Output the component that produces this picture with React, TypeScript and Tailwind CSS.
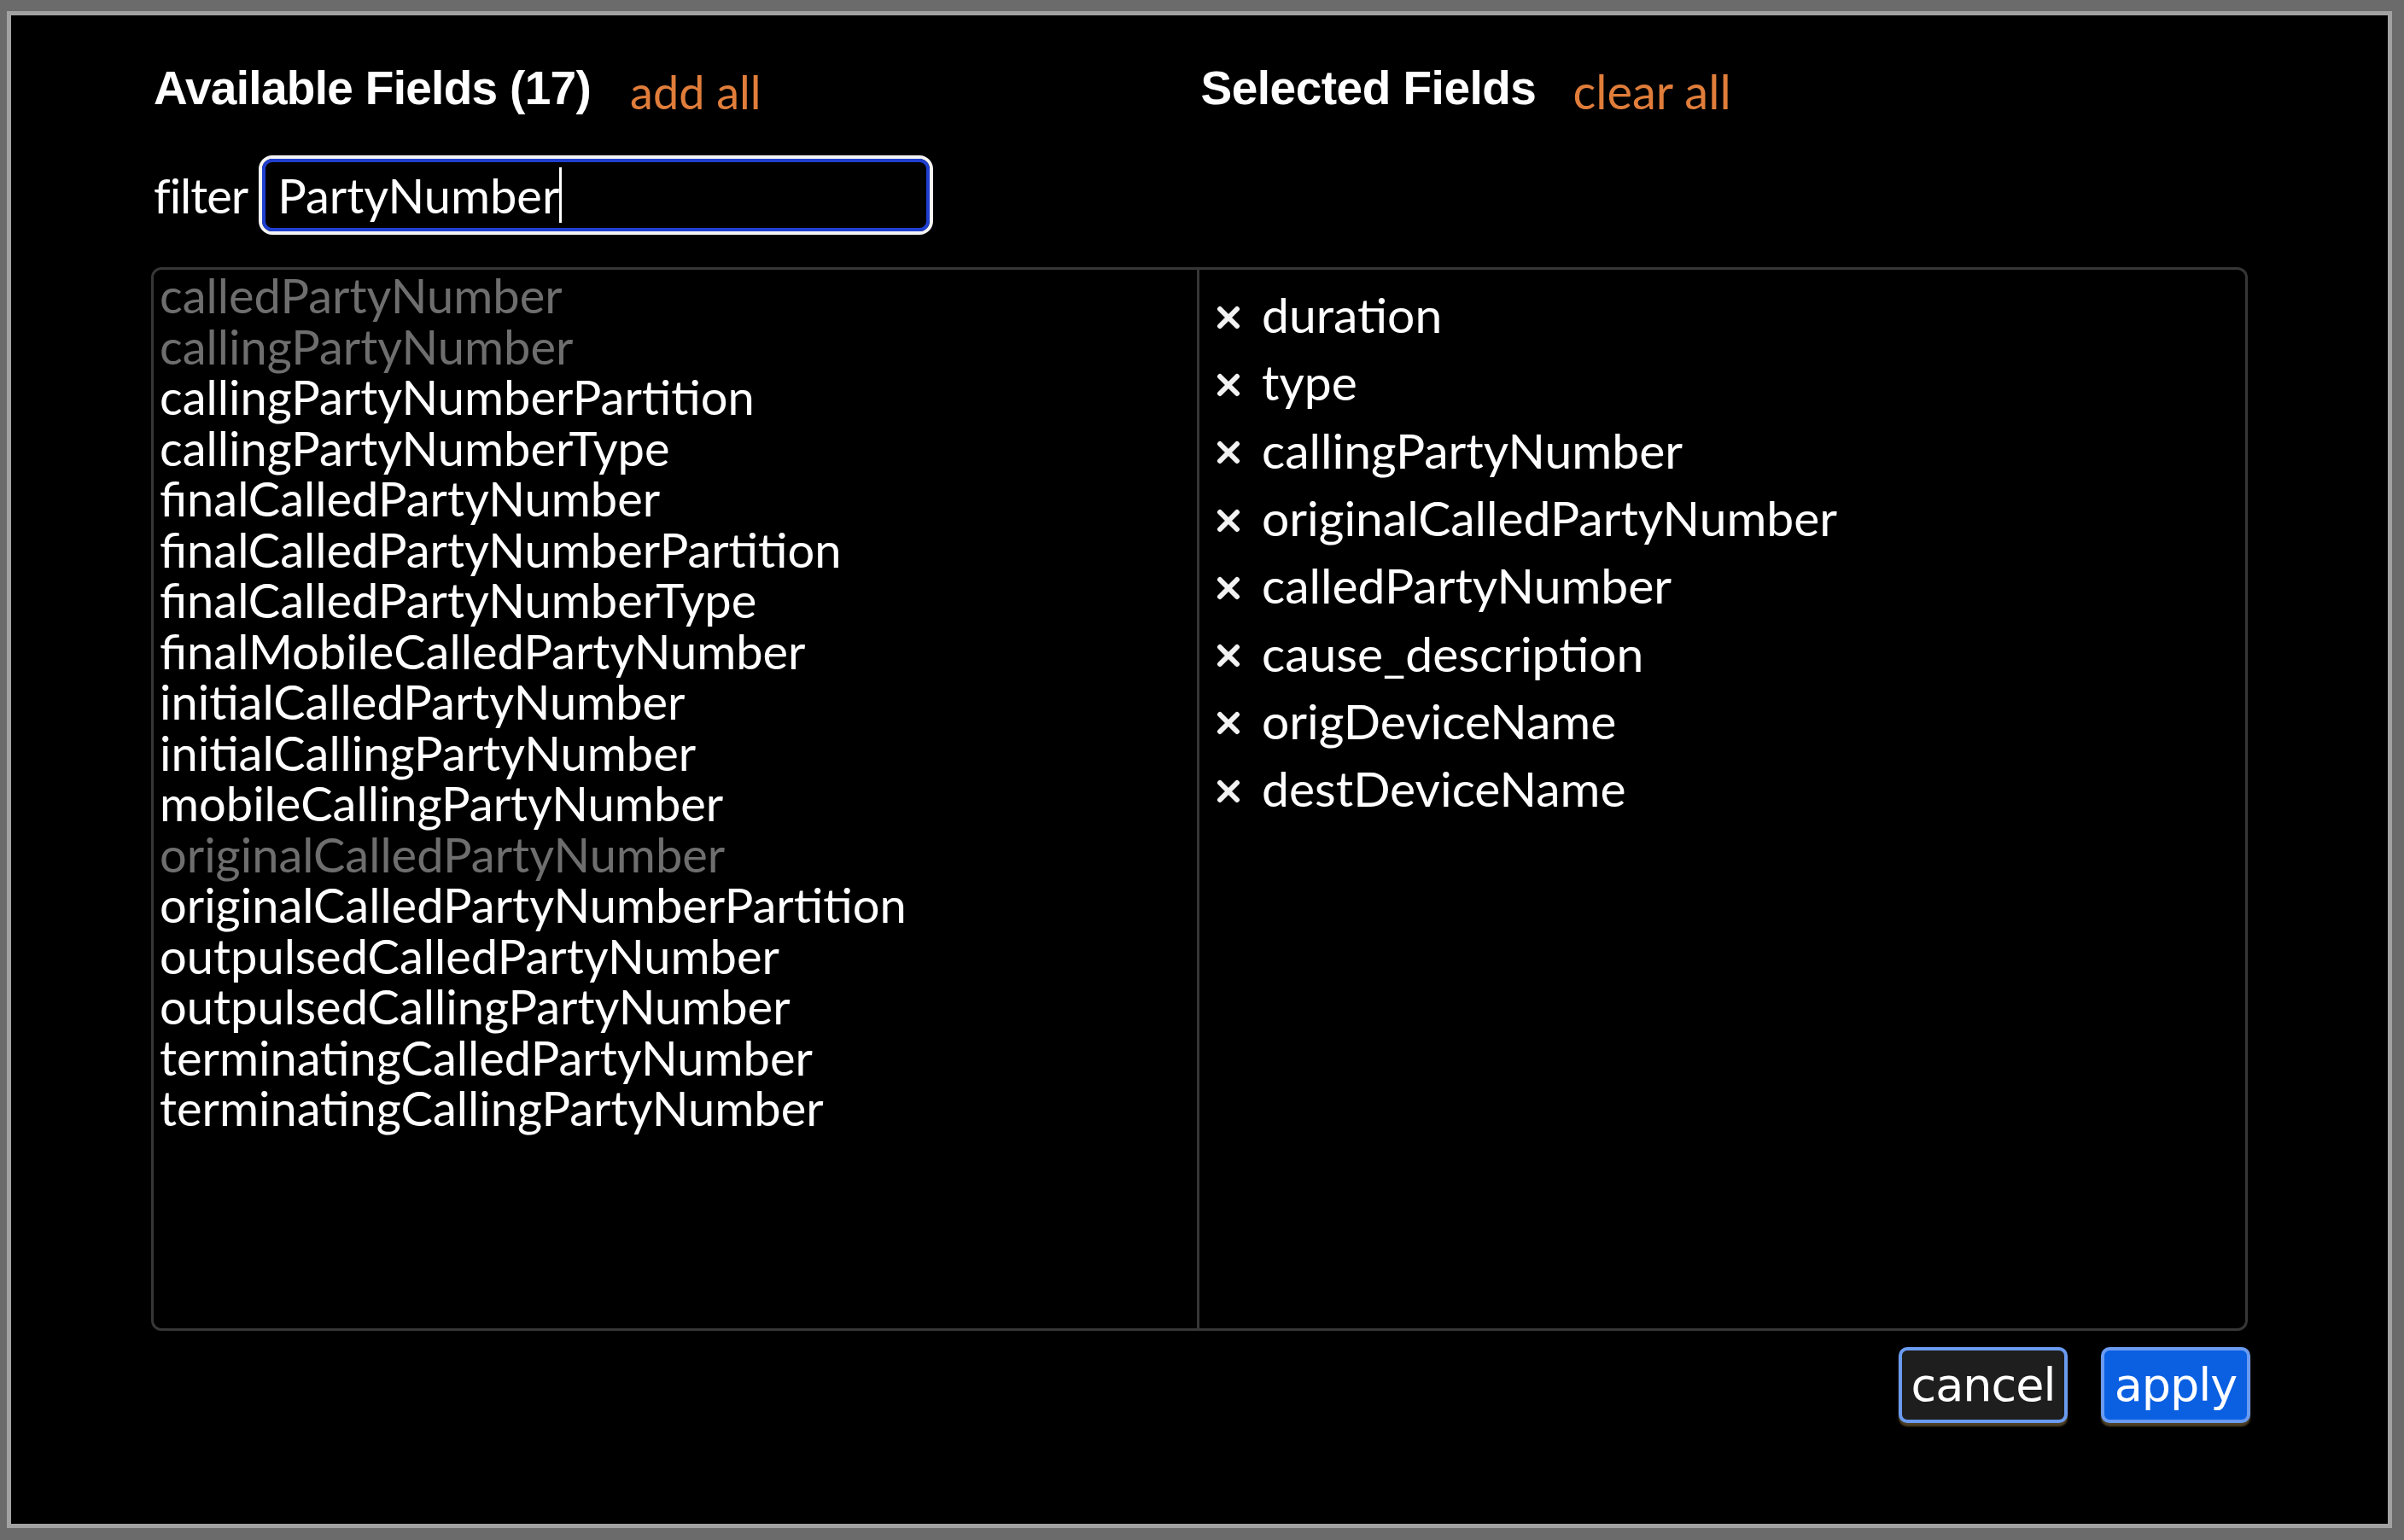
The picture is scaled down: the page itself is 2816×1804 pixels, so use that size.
import React from "react";

const selectedFields = [
  "duration",
  "type",
  "callingPartyNumber",
  "originalCalledPartyNumber",
  "calledPartyNumber",
  "cause_description",
  "origDeviceName",
  "destDeviceName",
];

const availableFields = [
  "calledPartyNumber",
  "callingPartyNumber",
  "callingPartyNumberPartition",
  "callingPartyNumberType",
  "finalCalledPartyNumber",
  "finalCalledPartyNumberPartition",
  "finalCalledPartyNumberType",
  "finalMobileCalledPartyNumber",
  "initialCalledPartyNumber",
  "initialCallingPartyNumber",
  "mobileCallingPartyNumber",
  "originalCalledPartyNumber",
  "originalCalledPartyNumberPartition",
  "outpulsedCalledPartyNumber",
  "outpulsedCallingPartyNumber",
  "terminatingCalledPartyNumber",
  "terminatingCallingPartyNumber",
];

function RemoveIcon() {
  return (
    <svg width="30" height="28" viewBox="0 0 30 28" className="mt-[6px] shrink-0">
      <path d="M5 4 L25 24 M25 4 L5 24" stroke="#f2f2f2" strokeWidth="6" strokeLinecap="round" />
    </svg>
  );
}

export default function App() {
  return (
    <div className="h-screen bg-[#6b6b6b] pb-[14px] pl-[8px] pr-[14px] pt-[13px]">
      <div className="flex h-full flex-col border-[5px] border-[#a2a2a2] bg-black px-[164px] pt-[58px] font-[Lato,sans-serif] text-white">
        {/* headings */}
        <div className="grid h-[55px] grid-cols-2 pl-[3px]">
          <div className="flex items-start gap-[46px]">
            <h2 className="font-['Liberation_Sans',sans-serif] text-[55px] font-bold leading-[55px] tracking-[-0.7px]">
              Available Fields (17)
            </h2>
            <span className="mt-[4px] text-[54px] leading-[55px] text-[#e07d3a]">add all</span>
          </div>
          <div className="flex items-start gap-[43px]">
            <h2 className="font-['Liberation_Sans',sans-serif] text-[55px] font-bold leading-[55px] tracking-[-0.5px]">
              Selected Fields
            </h2>
            <span className="mt-[3px] text-[56px] leading-[55px] text-[#e07d3a]">clear all</span>
          </div>
        </div>

        {/* filter */}
        <div className="mt-[51px] flex items-center gap-[13px] pl-[3px]">
          <span className="text-[56px] leading-none tracking-[-1px]">filter</span>
          <div className="h-[93px] w-[790px] rounded-[16px] border-[4px] border-[#f4f4f4]">
            <div className="flex h-full items-center rounded-[12px] border-[4px] border-[#1f3fd0] bg-black pl-[14px]">
              <span className="text-[56px]">PartyNumber</span>
              <span className="h-[65px] w-[3px] bg-white" />
            </div>
          </div>
        </div>

        {/* lists */}
        <div className="mt-[38px] grid h-[1246px] grid-cols-2 rounded-[12px] border-[3px] border-[#363636]">
          <ul className="border-r-[3px] border-[#363636] pl-[7px]">
            {availableFields.map((f) => (
              <li
                key={f}
                className={
                  "text-[56px] leading-[59.5px] " +
                  (selectedFields.includes(f) ? "text-[#6e6e6e]" : "text-white")
                }
              >
                {f}
              </li>
            ))}
          </ul>
          <ul className="pl-[19px] pt-[13px]">
            {selectedFields.map((f) => (
              <li key={f} className="flex h-[79.3px] items-center gap-[24px]">
                <RemoveIcon />
                <span className="text-[57px] leading-[79px]">{f}</span>
              </li>
            ))}
          </ul>
        </div>

        {/* actions */}
        <div className="mt-[19px] flex justify-end gap-[39px] font-['DejaVu_Sans',sans-serif]">
          <button className="h-[89px] w-[198px] rounded-[10px] border-[4px] border-[#6a9bf0] bg-[#1e1e1e] text-[54px] leading-none tracking-[-1px] text-white shadow-[0_4px_2px_rgba(110,90,50,0.7)]">
            cancel
          </button>
          <button className="mr-[-3px] h-[89px] w-[175px] rounded-[10px] border-[4px] border-[#6a9bf0] bg-[#0b60e2] text-[54px] leading-none tracking-[-1px] text-white shadow-[0_4px_2px_rgba(110,90,50,0.7)]">
            apply
          </button>
        </div>
      </div>
    </div>
  );
}
